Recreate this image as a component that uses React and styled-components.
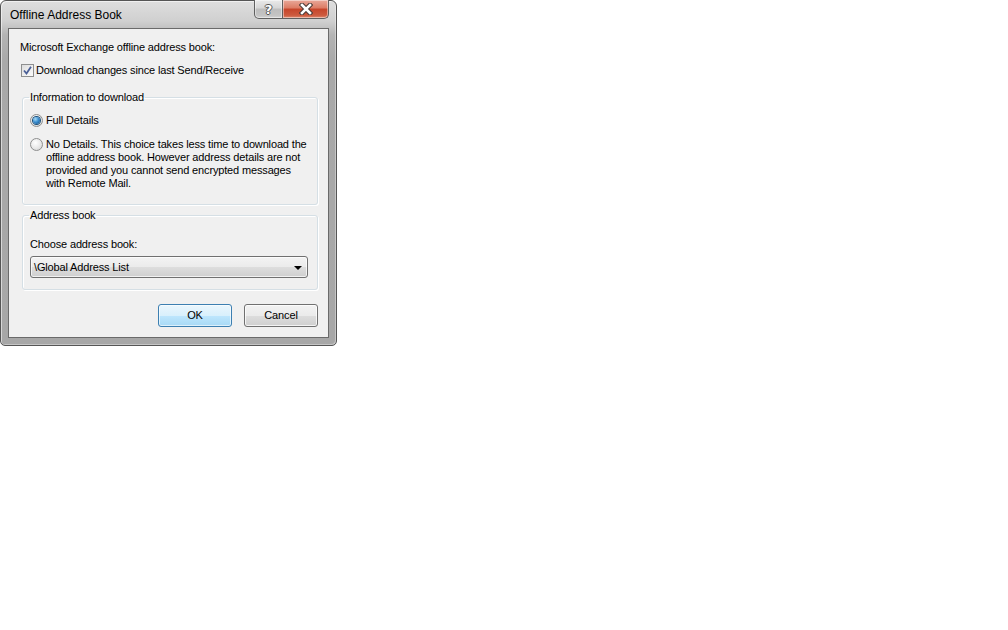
import React from 'react';
import styled, { createGlobalStyle } from 'styled-components';

const GlobalStyle = createGlobalStyle`
  html, body {
    margin: 0;
    padding: 0;
    background: #ffffff;
  }
  body {
    font-family: "Liberation Sans", Arial, sans-serif;
    font-size: 11px;
    letter-spacing: -0.15px;
    color: #000;
  }
`;

const Window = styled.div`
  width: 337px;
  height: 346px;
  box-sizing: border-box;
  display: flex;
  flex-direction: column;
  border: 1px solid #555;
  border-radius: 6px 6px 5px 5px;
  background: linear-gradient(to bottom, #dedede 0, #d0d0d0 20px, #b4b4b4 34px, #a9a9a9 60px, #a7a7a7 100%);
  box-shadow: inset 1px 1px 0 rgba(255, 255, 255, 0.55), inset -1px -1px 0 rgba(255, 255, 255, 0.35);
  padding: 0 7px 7px 7px;
`;

const TitleBar = styled.div`
  height: 27px;
  display: flex;
  justify-content: space-between;
  align-items: flex-start;
  flex-shrink: 0;
`;

const Title = styled.div`
  font-family: "Liberation Sans", Arial, sans-serif;
  font-size: 12px;
  letter-spacing: 0;
  line-height: 16px;
  padding: 6px 0 0 2px;
  color: #000;
`;

const CaptionButtons = styled.div`
  display: flex;
  margin-top: -1px;
`;

const CaptionButton = styled.div`
  height: 19px;
  box-sizing: border-box;
  display: flex;
  align-items: center;
  justify-content: center;
  border: 1px solid #5f5f5f;
  border-top: none;
  box-shadow: inset 0 0 0 1px rgba(255, 255, 255, 0.45);
  width: ${p => (p.$close ? '46px' : '29px')};
  border-radius: ${p => (p.$close ? '0 0 5px 0' : '0 0 0 5px')};
  border-left: ${p => (p.$close ? 'none' : '1px solid #5f5f5f')};
  background: ${p =>
    p.$close
      ? 'linear-gradient(to bottom, #e9a99a 0, #dc7b64 45%, #c6442a 50%, #cd5a3e 85%, #de8a6f 100%)'
      : 'linear-gradient(to bottom, #eaeaea 0, #d6d6d6 45%, #bdbdbd 50%, #c4c4c4 85%, #d2d2d2 100%)'};
`;

const HelpGlyph = styled.span`
  font-family: "DejaVu Sans", sans-serif;
  font-weight: bold;
  font-size: 13px;
  line-height: 13px;
  color: #fff;
  text-shadow: 1px 0 0 #555, -1px 0 0 #555, 0 1px 0 #555, 0 -1px 0 #555;
`;

const Body = styled.div`
  flex: 1;
  border: 1px solid #6a6a6a;
  background: #f0f0f0;
  padding: 12px 10px 0 11px;
  display: flex;
  flex-direction: column;
`;

const Text = styled.div`
  line-height: 13px;
  white-space: nowrap;
  margin-top: ${p => p.$top || 0}px;
`;

const CheckRow = styled.label`
  display: flex;
  align-items: center;
  gap: 2px;
  margin-top: 10px;
  line-height: 13px;
  white-space: nowrap;
`;

const Box = styled.span`
  width: 13px;
  height: 13px;
  box-sizing: border-box;
  border: 1px solid #8e8f8f;
  background: linear-gradient(135deg, #dcdcdc 0, #f0f0f0 60%, #fbfbfb 100%);
  display: flex;
  align-items: center;
  justify-content: center;
  flex-shrink: 0;
  margin-left: 1px;
`;

const Group = styled.fieldset`
  min-width: 0;
  margin: ${p => p.$top}px 0 0 2px;
  padding: 0 9px ${p => p.$bottom}px 7px;
  border: 1px solid #d5dfe5;
  border-radius: 3px;
  box-shadow: inset 1px 1px 0 #fff, 1px 1px 0 #fff;
`;

const Legend = styled.legend`
  padding: 0 1px;
  margin-left: -1px;
  line-height: 13px;
  white-space: nowrap;
`;

const RadioRow = styled.label`
  display: flex;
  align-items: flex-start;
  gap: 3px;
  margin-top: ${p => p.$top}px;
  line-height: 13px;
  white-space: nowrap;
`;

const RadioDot = styled.span`
  width: 13px;
  height: 13px;
  box-sizing: border-box;
  border-radius: 50%;
  border: 1px solid #8e8f8f;
  background: radial-gradient(circle at 40% 35%, #ffffff 0, #e8e8e8 55%, #cfcfcf 100%);
  display: flex;
  align-items: center;
  justify-content: center;
  flex-shrink: 0;

  &::after {
    content: '';
    display: ${p => (p.$checked ? 'block' : 'none')};
    width: 7px;
    height: 7px;
    border-radius: 50%;
    background: radial-gradient(circle at 35% 30%, #a8dcf8 0, #3c8fd0 45%, #0d4c86 100%);
    box-shadow: 0 0 0 1px #1a4f7a;
  }
`;

const Select = styled.div`
  margin-top: 5px;
  height: 22px;
  box-sizing: border-box;
  border: 1px solid #707070;
  border-radius: 3px;
  background: linear-gradient(to bottom, #f3f3f3 0, #ebebeb 50%, #dddddd 51%, #cfcfcf 100%);
  box-shadow: inset 0 0 0 1px rgba(255, 255, 255, 0.7);
  display: flex;
  align-items: center;
  justify-content: space-between;
  padding: 0 5px 0 3px;
  line-height: 13px;
`;

const Arrow = styled.span`
  width: 0;
  height: 0;
  border-left: 4px solid transparent;
  border-right: 4px solid transparent;
  border-top: 4px solid #000;
  margin-top: 1px;
`;

const ButtonRow = styled.div`
  display: flex;
  justify-content: flex-end;
  gap: 12px;
  margin-top: 14px;
`;

const Button = styled.div`
  width: 74px;
  height: 23px;
  box-sizing: border-box;
  border-radius: 3px;
  display: flex;
  align-items: center;
  justify-content: center;
  line-height: 13px;
  border: 1px solid ${p => (p.$default ? '#3c7fb1' : '#707070')};
  background: ${p =>
    p.$default
      ? 'linear-gradient(to bottom, #eaf6fd 0, #d9f0fc 50%, #bee6fd 51%, #a7d9f5 100%)'
      : 'linear-gradient(to bottom, #f2f2f2 0, #ebebeb 50%, #dddddd 51%, #cfcfcf 100%)'};
  box-shadow: inset 0 0 0 1px ${p => (p.$default ? 'rgba(255, 255, 255, 0.6)' : 'rgba(255, 255, 255, 0.75)')};
`;

const CheckMark = () => (
  <svg width="9" height="9" viewBox="0 0 9 9">
    <path d="M1 4.5 L3.5 7.5 L8 0.8" fill="none" stroke="#4a5f97" strokeWidth="1.8" />
  </svg>
);

const CloseMark = () => (
  <svg width="14" height="12" viewBox="0 0 14 12">
    <path d="M3 2 L11 10 M11 2 L3 10" stroke="#4a3a36" strokeWidth="4.6" strokeLinecap="square" />
    <path d="M3 2 L11 10 M11 2 L3 10" stroke="#ffffff" strokeWidth="2.6" strokeLinecap="square" />
  </svg>
);

export default function App() {
  return (
    <>
      <GlobalStyle />
      <Window>
        <TitleBar>
          <Title>Offline Address Book</Title>
          <CaptionButtons>
            <CaptionButton>
              <HelpGlyph>?</HelpGlyph>
            </CaptionButton>
            <CaptionButton $close>
              <CloseMark />
            </CaptionButton>
          </CaptionButtons>
        </TitleBar>
        <Body>
          <Text>Microsoft Exchange offline address book:</Text>
          <CheckRow>
            <Box>
              <CheckMark />
            </Box>
            Download changes since last Send/Receive
          </CheckRow>

          <Group $top={14} $bottom={14}>
            <Legend>Information to download</Legend>
            <RadioRow $top={10}>
              <RadioDot $checked />
              Full Details
            </RadioRow>
            <RadioRow $top={11}>
              <RadioDot />
              <span>
                No Details. This choice takes less time to download the
                <br />
                offline address book. However address details are not
                <br />
                provided and you cannot send encrypted messages
                <br />
                with Remote Mail.
              </span>
            </RadioRow>
          </Group>

          <Group $top={4} $bottom={11}>
            <Legend>Address book</Legend>
            <Text $top={16}>Choose address book:</Text>
            <Select>
              <span>\Global Address List</span>
              <Arrow />
            </Select>
          </Group>

          <ButtonRow>
            <Button $default>OK</Button>
            <Button>Cancel</Button>
          </ButtonRow>
        </Body>
      </Window>
    </>
  );
}
